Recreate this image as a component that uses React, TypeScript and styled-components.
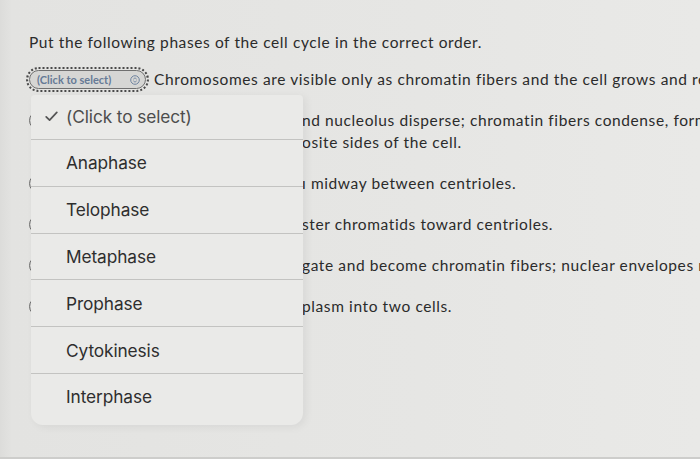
import React from "react";
import styled, { createGlobalStyle } from "styled-components";

const GlobalStyle = createGlobalStyle`
  html, body {
    margin: 0;
    padding: 0;
  }
  body {
    background: #e2e2e0;
    font-family: Lato, "Open Sans", sans-serif;
    color: #2b2b2b;
    overflow: hidden;
  }
`;

const Page = styled.div`
  position: relative;
  width: 700px;
  height: 459px;
  overflow: hidden;
  box-sizing: border-box;
  padding: 32px 0 0 29px;
  background: linear-gradient(90deg, #dcdcda 0px, #e3e3e1 12px, #e6e6e4 60%, #e9e9e7 100%);
  border-bottom: 2px solid #cdcdcb;
`;

const Title = styled.div`
  font-size: 15.5px;
  letter-spacing: 0.6px;
  line-height: 20px;
  white-space: nowrap;
  color: #2b2b2b;
`;

const Rows = styled.div`
  display: flex;
  flex-direction: column;
  gap: 19px;
  margin-top: 16px;
`;

const Row = styled.div`
  display: flex;
  align-items: flex-start;
  gap: 8px;
  white-space: nowrap;
`;

const Pill = styled.div<{ $focused?: boolean }>`
  flex: none;
  display: flex;
  align-items: center;
  justify-content: space-between;
  box-sizing: border-box;
  width: 117px;
  height: 19px;
  margin-top: 2px;
  padding: 0 5px 0 7px;
  border: 1px solid #6f6f6f;
  border-radius: 10px;
  background: #d6d6d4;
  color: #667a96;
  font-size: 11px;
  font-weight: 700;
  outline: ${(p) => (p.$focused ? "2px dotted #4a4a4a" : "none")};
  outline-offset: 1px;
`;

const Updown = styled.span`
  display: flex;
  align-items: center;
  justify-content: center;
  width: 10px;
  height: 10px;
`;

const Sentence = styled.div<{ $indent?: number }>`
  font-size: 15.5px;
  letter-spacing: 0.6px;
  line-height: 22px;
  padding-left: ${(p) => p.$indent ?? 0}px;
  color: #2b2b2b;
`;

const Menu = styled.div`
  position: absolute;
  left: 31px;
  top: 95px;
  width: 272px;
  height: 330px;
  background: #eaeae8;
  border-radius: 4px 4px 12px 12px;
  box-shadow: 3px 2px 8px rgba(0, 0, 0, 0.06);
  display: flex;
  flex-direction: column;
  font-family: Inter, Roboto, sans-serif;
`;

const Item = styled.div<{ $first?: boolean; $last?: boolean }>`
  display: flex;
  align-items: center;
  box-sizing: border-box;
  height: ${(p) => (p.$first ? 45 : p.$last ? 51 : 47)}px;
  padding-left: 14px;
  padding-bottom: ${(p) => (p.$first ? 1 : p.$last ? 6 : 0)}px;
  border-bottom: ${(p) => (p.$last ? "none" : "1px solid #c3c3c1")};
  font-size: 17.3px;
  color: ${(p) => (p.$first ? "#4d4d4d" : "#2e2e2e")};
  letter-spacing: -0.1px;
`;

const Check = styled.span`
  display: flex;
  width: 21px;
`;

const Label = styled.span<{ $inset?: boolean }>`
  padding-left: ${(p) => (p.$inset ? 21 : 0)}px;
`;

const sentences: { text: string[] }[] = [
  { text: ["nd nucleolus disperse; chromatin fibers condense, forming chromosomes", "osite sides of the cell."] },
  { text: ["ı midway between centrioles."] },
  { text: ["ster chromatids toward centrioles."] },
  { text: ["gate and become chromatin fibers; nuclear envelopes re-form"] },
  { text: ["plasm into two cells."] },
];

const phases = ["Anaphase", "Telophase", "Metaphase", "Prophase", "Cytokinesis", "Interphase"];

function UpDownIcon() {
  return (
    <Updown>
      <svg width="10" height="10" viewBox="0 0 10 10">
        <circle cx="5" cy="5" r="4.3" fill="none" stroke="#6f84a0" strokeWidth="1" />
        <path d="M3.3 4.2 L5 2.8 L6.7 4.2 M3.3 5.8 L5 7.2 L6.7 5.8" fill="none" stroke="#6f84a0" strokeWidth="0.9" />
      </svg>
    </Updown>
  );
}

export default function App() {
  return (
    <>
      <GlobalStyle />
      <Page>
        <Title>Put the following phases of the cell cycle in the correct order.</Title>
        <Rows>
          <Row>
            <Pill $focused>
              (Click to select) <UpDownIcon />
            </Pill>
            <Sentence>Chromosomes are visible only as chromatin fibers and the cell grows and replicates its DNA.</Sentence>
          </Row>
          {sentences.map((s, i) => (
            <Row key={i}>
              <Pill>
                (Click to select) <UpDownIcon />
              </Pill>
              <Sentence $indent={148}>
                {s.text.map((line, j) => (
                  <div key={j}>{line}</div>
                ))}
              </Sentence>
            </Row>
          ))}
        </Rows>

        <Menu>
          <Item $first>
            <Check>
              <svg width="13" height="11" viewBox="0 0 13 11">
                <path d="M1.2 5.8 L4.6 9.2 L11.8 1.4" fill="none" stroke="#555" strokeWidth="1.7" strokeLinecap="round" strokeLinejoin="round" />
              </svg>
            </Check>
            <Label>(Click to select)</Label>
          </Item>
          {phases.map((p, i) => (
            <Item key={p} $last={i === phases.length - 1}>
              <Label $inset>{p}</Label>
            </Item>
          ))}
        </Menu>
      </Page>
    </>
  );
}
